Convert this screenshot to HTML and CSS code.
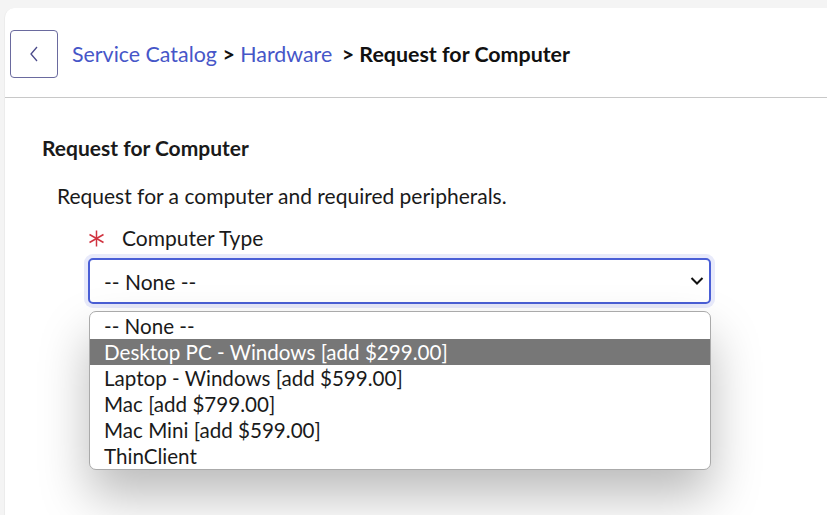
FILE: index.html
```html
<!DOCTYPE html>
<html lang="en">
<head>
  <meta charset="UTF-8" />
  <title>Request for Computer</title>
  <link rel="stylesheet" href="styles.css">
</head>
<body>
  <div class="card">
    <div class="header">
      <button class="back-btn" aria-label="Back">
        <svg width="12" height="20" viewBox="0 0 12 20"><polyline points="9,3 3,10 9,17" fill="none" stroke="#4a4a8a" stroke-width="1.3"/></svg>
      </button>
      <div class="crumbs">
        <a href="#">Service Catalog</a> <span class="sep">&gt;</span> <a href="#">Hardware</a> <span class="sep current">&gt; Request for Computer</span>
      </div>
    </div>

    <div class="form">
      <h2 class="item-title">Request for Computer</h2>
      <p class="item-desc">Request for a computer and required peripherals.</p>

      <div class="field">
        <div class="label">
          <span class="req">
            <svg width="17" height="17" viewBox="0 0 17 17"><g stroke="#d0323f" stroke-width="1.5"><line x1="8.5" y1="0.5" x2="8.5" y2="16.5"/><line x1="1.5" y1="4.5" x2="15.5" y2="12.5"/><line x1="1.5" y1="12.5" x2="15.5" y2="4.5"/></g></svg>
          </span>Computer Type
        </div>
        <div class="select-wrap">
          <div class="select">
            <span>-- None --</span>
            <svg width="14" height="10" viewBox="0 0 14 10"><polyline points="1.5,2 7,7.5 12.5,2" fill="none" stroke="#111" stroke-width="2"/></svg>
          </div>
          <ul class="options">
            <li>-- None --</li>
            <li class="active">Desktop PC - Windows [add $299.00]</li>
            <li>Laptop - Windows [add $599.00]</li>
            <li>Mac [add $799.00]</li>
            <li>Mac Mini [add $599.00]</li>
            <li>ThinClient</li>
          </ul>
        </div>
      </div>
    </div>
  </div>
</body>
</html>
```

FILE: styles.css
```css
body {
  margin: 0;
  padding: 8px 0 0 4px;
  background-color: #f4f4f4;
  font-family: Lato, "Open Sans", sans-serif;
  color: #1a1a1a;
  height: 507px;
  overflow: hidden;
}
.card {
  background: #fff;
  border-top-left-radius: 10px;
  border-left: 1px solid #ececec;
  height: 100%;
}
.header {
  display: flex;
  align-items: center;
  gap: 14px;
  height: 89px;
  padding-left: 5px;
  border-bottom: 1px solid #c8c8c8;
}
.back-btn {
  width: 48px;
  height: 48px;
  margin-top: 2px;
  border: 1px solid #6a6a9e;
  border-radius: 4px;
  background: #fff;
  display: flex;
  align-items: center;
  justify-content: center;
  padding: 0;
}
.crumbs {
  font-size: 21.4px;
  margin-top: 3px;
}
.crumbs a {
  color: #4656c8;
  text-decoration: none;
}
.sep {
  font-weight: 700;
  color: #111;
}
.current {
  margin-left: 4px;
}
.form {
  padding: 37px 0 0 37px;
}
.item-title {
  margin: 0;
  font-size: 21px;
  font-weight: 700;
  line-height: 26px;
}
.item-desc {
  margin: 22px 0 0 15px;
  font-size: 21px;
  line-height: 26px;
}
.field {
  margin-left: 46px;
  width: 623px;
}
.label {
  display: flex;
  align-items: center;
  font-size: 21px;
  line-height: 26px;
  margin-top: 16px;
}
.req {
  display: flex;
  width: 34px;
}
.select-wrap {
  position: relative;
  margin-top: 7px;
}
.select {
  height: 42px;
  border: 2px solid #4a5fd6;
  border-radius: 5px;
  box-shadow: 0 0 0 4px #e8eafb;
  display: flex;
  align-items: center;
  justify-content: space-between;
  padding: 0 5px 0 14px;
  font-size: 21px;
}
.options {
  position: absolute;
  top: 53px;
  left: 1px;
  right: 0;
  margin: 0;
  padding: 1px 0 0;
  list-style: none;
  background: #fff;
  border: 1px solid #aaa;
  border-radius: 7px;
  box-shadow: 0 26px 50px rgba(0, 0, 0, 0.27);
  overflow: hidden;
}
.options li {
  height: 26px;
  line-height: 26px;
  padding-left: 14px;
  font-size: 20.6px;
  color: #1a1a1a;
}
.options li.active {
  background: #777;
  color: #fff;
}
```
